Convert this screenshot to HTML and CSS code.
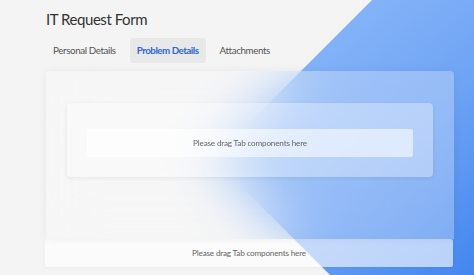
FILE: index.html
```html
<!DOCTYPE html>
<html>
<head>
<meta charset="utf-8">
<link rel="stylesheet" href="styles.css">
</head>
<body>
<svg class="backdrop" width="474" height="275" viewBox="0 0 474 275" aria-hidden="true">
  <defs>
    <linearGradient id="blue" x1="0.2" y1="0" x2="1" y2="1">
      <stop offset="0" stop-color="#8fbbf8"/>
      <stop offset="0.55" stop-color="#6fa4f5"/>
      <stop offset="1" stop-color="#4386ef"/>
    </linearGradient>
  </defs>
  <polygon points="372,0 474,0 474,275 330,275 213.5,158.5" fill="url(#blue)"/>
</svg>
<main class="page">
  <h1 class="title">IT Request Form</h1>
  <nav class="tabs">
    <span class="tab">Personal Details</span>
    <span class="tab active">Problem Details</span>
    <span class="tab">Attachments</span>
  </nav>
  <section class="panel">
    <div class="inner-card">
      <div class="drop">Please drag Tab components here</div>
    </div>
  </section>
  <div class="drop bar">Please drag Tab components here</div>
</main>
</body>
</html>
```
FILE: styles.css
```css
html, body {
  margin: 0;
  padding: 0;
}
body {
  width: 474px;
  height: 275px;
  overflow: hidden;
  background: #f4f4f4;
  font-family: "Lato", "Open Sans", sans-serif;
  position: relative;
}
.backdrop {
  position: absolute;
  left: 0;
  top: 0;
  z-index: 0;
}
.page {
  position: relative;
  z-index: 1;
  padding: 9px 0 0 46px;
  display: flex;
  flex-direction: column;
}
.title {
  margin: 0;
  font-size: 15px;
  line-height: 20px;
  font-weight: 400;
  color: #333;
  letter-spacing: -0.45px;
}
.tabs {
  margin-top: 9px;
  display: flex;
  gap: 7px;
}
.tab {
  font-size: 9.8px;
  line-height: 13px;
  padding: 6px 7px;
  border-radius: 3px;
  color: #555;
  letter-spacing: -0.4px;
}
.tab.active {
  background: #e8e8e8;
  color: #2f67d3;
  font-weight: 700;
  letter-spacing: -0.5px;
}
.panel {
  margin-top: 8px;
  width: 408px;
  height: 168px;
  box-sizing: border-box;
  padding: 32px 21px 0;
  border-radius: 4px 4px 0 0;
  background: rgba(250, 250, 250, 0.28);
  backdrop-filter: blur(28px);
  -webkit-backdrop-filter: blur(28px);
  box-shadow: 0 0 10px rgba(0, 0, 0, 0.06);
}
.inner-card {
  padding: 26px 20px 20px;
  border-radius: 4px;
  background: rgba(255, 255, 255, 0.32);
  box-shadow: 0 1px 4px rgba(0, 0, 0, 0.07);
}
.drop {
  height: 28px;
  display: flex;
  align-items: center;
  justify-content: center;
  font-size: 8.2px;
  letter-spacing: -0.2px;
  color: #666;
  background: rgba(255, 255, 255, 0.55);
  border-radius: 2px;
}
.bar {
  width: 408px;
  margin-left: -1px;
  background: rgba(255, 255, 255, 0.62);
  box-shadow: 0 1px 4px rgba(0, 0, 0, 0.04);
}
```
